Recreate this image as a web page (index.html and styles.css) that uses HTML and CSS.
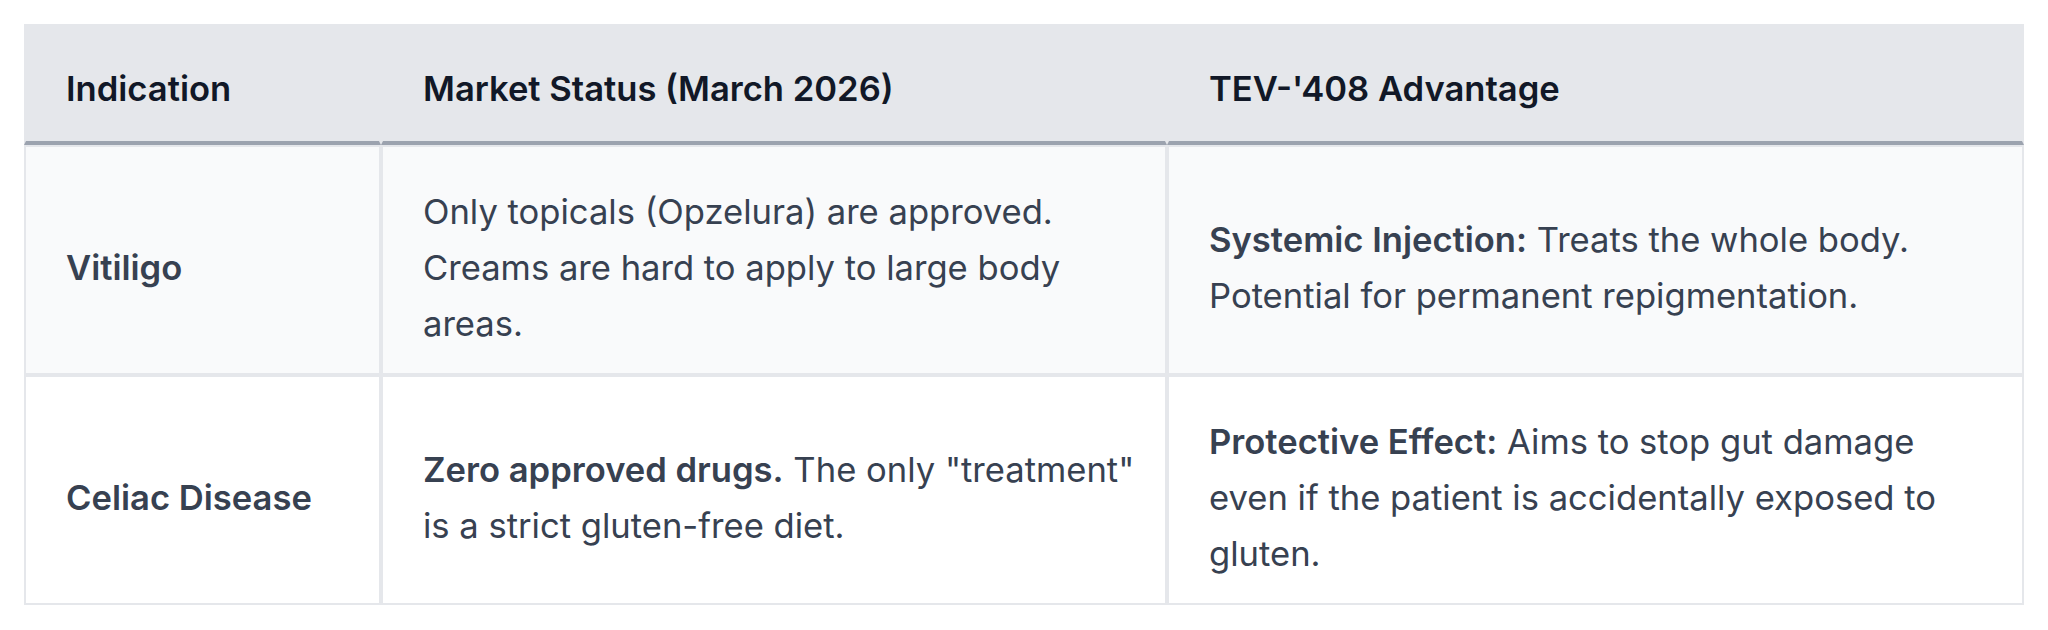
FILE: index.html
```html
<!DOCTYPE html>
<html lang="en">
<head>
<meta charset="utf-8">
<title>TEV-'408 Indications</title>
<link rel="stylesheet" href="styles.css">
</head>
<body>
<table class="grid">
  <colgroup>
    <col class="c1">
    <col class="c2">
    <col class="c3">
  </colgroup>
  <thead>
    <tr>
      <th>Indication</th>
      <th>Market Status (March 2026)</th>
      <th>TEV-'408 Advantage</th>
    </tr>
  </thead>
  <tbody>
    <tr class="alt">
      <td class="label">Vitiligo</td>
      <td>Only topicals (Opzelura) are approved. Creams are hard to apply to large body areas.</td>
      <td><strong>Systemic Injection:</strong> Treats the whole body. Potential for permanent repigmentation.</td>
    </tr>
    <tr>
      <td class="label">Celiac Disease</td>
      <td><strong>Zero approved drugs.</strong> The only "treatment" is a strict gluten-free diet.</td>
      <td><strong>Protective Effect:</strong> Aims to stop gut damage even if the patient is accidentally exposed to gluten.</td>
    </tr>
  </tbody>
</table>
</body>
</html>
```
FILE: styles.css
```css
html, body {
  margin: 0;
  background: #ffffff;
}
body {
  padding: 24px;
  font-family: Inter, "Noto Sans", "Liberation Sans", sans-serif;
  font-size: 34.6px;
  line-height: 56px;
  color: #374151;
}
.grid {
  width: 2000px;
  table-layout: fixed;
  border-collapse: separate;
  border-spacing: 0;
}
.c1 { width: 357px; }
.c2 { width: 786px; }
.c3 { width: 857px; }
.grid th {
  background: #e5e7eb;
  color: #111827;
  font-weight: 600;
  text-align: left;
  padding: 34px 26px 25px 40px;
  border: 2px solid #e5e7eb;
  border-bottom: 4px solid #9ca3af;
}
.grid td {
  padding: 36px 26px 22px 40px;
  border: 2px solid #e5e7eb;
  vertical-align: middle;
  background: #ffffff;
}
.grid tr.alt td {
  background: #f9fafb;
}
.grid td.label {
  font-weight: 600;
}
.grid strong {
  font-weight: 600;
}
```
